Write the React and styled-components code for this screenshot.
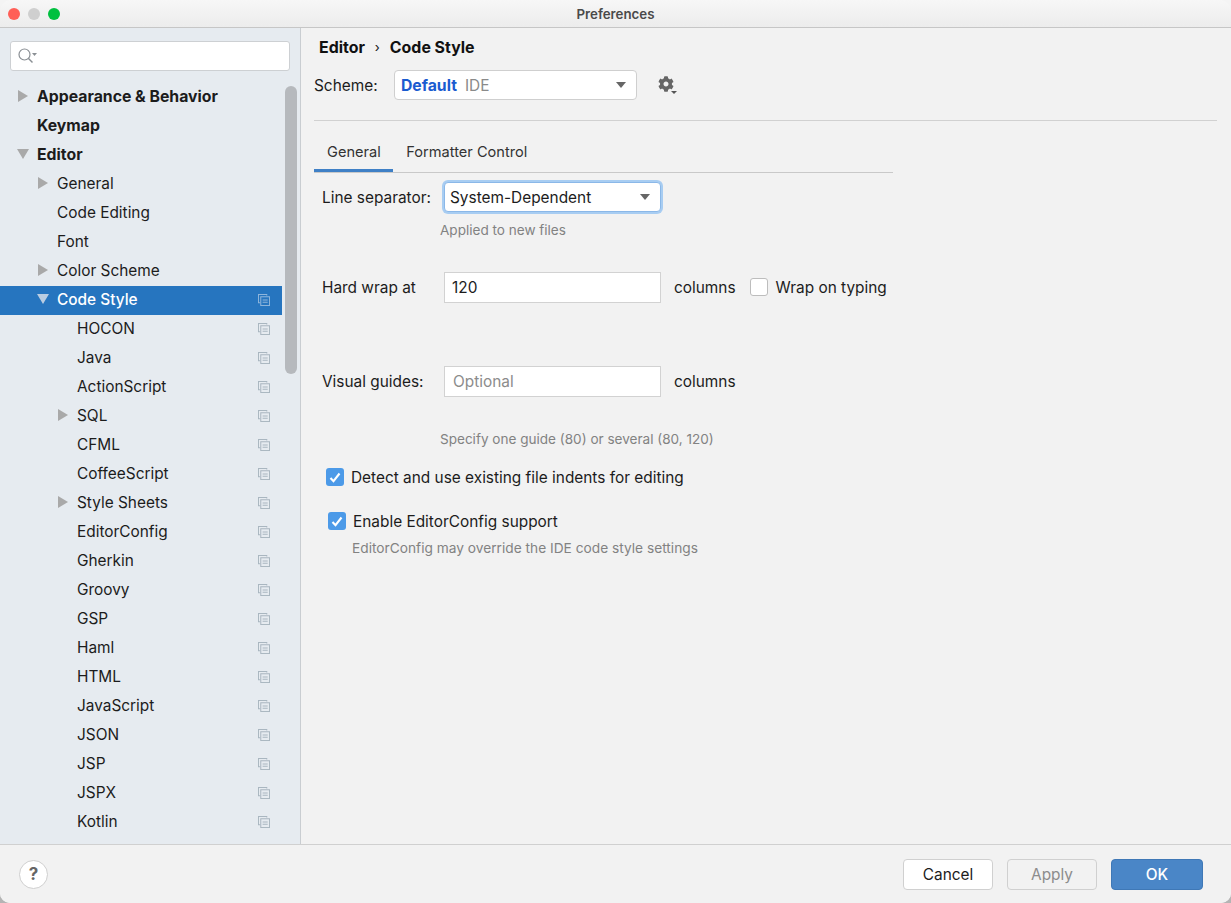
import React from 'react';
import styled, { createGlobalStyle } from 'styled-components';
import { FaCog } from 'react-icons/fa';

const Global = createGlobalStyle`
  html, body {
    margin: 0;
    padding: 0;
  }
  html {
    background: linear-gradient(#f4f4f4 50%, #b4b4b4 50%);
  }
  body {
    font-family: Inter, "Liberation Sans", sans-serif;
    -webkit-font-smoothing: antialiased;
  }
`;

const Window = styled.div`
  width: 1231px;
  height: 903px;
  display: flex;
  flex-direction: column;
  background: #f2f2f2;
  border-radius: 10px;
  overflow: hidden;
  color: #1c1c1c;
  font-size: 15.4px;
`;

const TitleBar = styled.div`
  height: 27px;
  flex: none;
  position: relative;
  display: flex;
  align-items: center;
  justify-content: center;
  background: linear-gradient(#f7f7f7, #ececec);
  border-bottom: 1px solid #c6c6c6;
  font-size: 13.3px;
  font-weight: 600;
  color: #4a4a4a;
`;

const Lights = styled.div`
  position: absolute;
  left: 8px;
  top: 8px;
  display: flex;
  gap: 8px;
`;

const Light = styled.span`
  width: 12px;
  height: 12px;
  border-radius: 50%;
  background: ${p => p.$color};
`;

const Main = styled.div`
  flex: 1;
  min-height: 0;
  display: flex;
`;

const Sidebar = styled.div`
  width: 300px;
  flex: none;
  position: relative;
  display: flex;
  flex-direction: column;
  background: #e6ebf0;
  border-right: 1px solid #c9cdd1;
  overflow: hidden;
`;

const SearchBox = styled.div`
  margin: 13px 10px 12px;
  height: 30px;
  flex: none;
  box-sizing: border-box;
  display: flex;
  align-items: center;
  padding-left: 7px;
  background: #fff;
  border: 1px solid #cdd0d3;
  border-radius: 3px;
`;

const TreeList = styled.div`
  width: 282px;
  flex: none;
  display: flex;
  flex-direction: column;
`;

const Row = styled.div`
  height: 29px;
  box-sizing: border-box;
  flex: none;
  display: flex;
  align-items: center;
  padding-left: ${p => p.$level * 20 + 17}px;
  padding-bottom: 3px;
  background: ${p => (p.$selected ? '#2675bf' : 'transparent')};
  color: ${p => (p.$selected ? '#fff' : '#1c1c1c')};
  font-weight: ${p => (p.$bold ? 700 : p.$selected ? 500 : 400)};
  font-size: ${p => (p.$bold ? 15.8 : 15.4)}px;
`;

const ArrowSlot = styled.span`
  width: 20px;
  flex: none;
  display: flex;
  align-items: center;
`;

const RowLabel = styled.span`
  flex: 1;
  white-space: nowrap;
`;

const CopyWrap = styled.span`
  width: 12px;
  height: 12px;
  margin-right: 12px;
  margin-top: 2px;
  display: flex;
`;

const ScrollThumb = styled.div`
  position: absolute;
  left: 285px;
  top: 58px;
  width: 12px;
  height: 288px;
  border-radius: 6px;
  background: #b6b9bd;
`;

const Content = styled.div`
  flex: 1;
  min-width: 0;
  padding: 0 14px 0 13px;
  display: flex;
  flex-direction: column;
`;

const Breadcrumb = styled.div`
  height: 38px;
  padding-left: 5px;
  display: flex;
  align-items: center;
  gap: 10px;
  font-weight: 700;
  color: #111;
  box-sizing: border-box;
`;

const Crumb = styled.span`
  font-size: 15.9px;
`;

const CrumbSep = styled.span`
  font-size: 13px;
  font-weight: 400;
`;

const SchemeRow = styled.div`
  margin-top: 4px;
  display: flex;
  align-items: center;
  height: 30px;
`;

const SchemeLabel = styled.span`
  width: 80px;
`;

const Dropdown = styled.div`
  box-sizing: border-box;
  width: ${p => p.$width}px;
  height: 30px;
  display: flex;
  align-items: center;
  padding: 0 9px 0 ${p => (p.$focused ? 5 : 6)}px;
  background: #fff;
  border-radius: 4px;
  border: 1px solid ${p => (p.$focused ? '#8bb8e8' : '#cfcfcf')};
  box-shadow: ${p => (p.$focused ? '0 0 0 2px #a8cdf2' : 'none')};
`;

const DropText = styled.span`
  flex: 1;
  white-space: nowrap;
`;

const SchemeName = styled.span`
  color: #1a5bd0;
  font-weight: 700;
  font-size: 15.75px;
  margin-right: 8px;
`;

const SchemeKind = styled.span`
  color: #8a8a8a;
`;

const GearBtn = styled.span`
  position: relative;
  margin-left: 21px;
  margin-top: 2px;
  width: 22px;
  height: 20px;
  color: #666;
  display: flex;
`;

const GearArrow = styled.span`
  position: absolute;
  right: 3px;
  bottom: 2px;
  border-left: 3px solid transparent;
  border-right: 3px solid transparent;
  border-top: 3px solid #555;
`;

const Divider = styled.div`
  height: 1px;
  margin-top: 20px;
  background: #d1d1d1;
`;

const TabBar = styled.div`
  margin-top: 16px;
  width: 579px;
  height: 35px;
  box-sizing: content-box;
  display: flex;
  border-bottom: 1px solid #c9c9c9;
`;

const Tab = styled.div`
  box-sizing: border-box;
  height: 35px;
  padding: 0 12.5px 3px 13px;
  display: flex;
  align-items: center;
  font-size: 14.6px;
  color: #333;
  border-bottom: 3px solid ${p => (p.$active ? '#3f80c6' : 'transparent')};
`;

const Form = styled.div`
  padding-left: 8px;
  display: flex;
  flex-direction: column;
`;

const FieldRow = styled.div`
  margin-top: ${p => p.$top}px;
  height: 30px;
  display: flex;
  align-items: center;
  white-space: nowrap;
`;

const FieldLabel = styled.span`
  width: 122px;
  flex: none;
`;

const TextBox = styled.div`
  box-sizing: border-box;
  width: 217px;
  height: 31px;
  display: flex;
  align-items: center;
  padding-left: ${p => (p.$placeholder ? 8 : 7)}px;
  background: #fff;
  border: 1px solid #d2d2d2;
  color: ${p => (p.$placeholder ? '#8c8c8c' : '#1c1c1c')};
`;

const Unit = styled.span`
  margin-left: 13px;
`;

const Hint = styled.div`
  margin-top: ${p => p.$top}px;
  margin-left: ${p => p.$left}px;
  height: 18px;
  line-height: 18px;
  font-size: ${p => p.$size || 13.55}px;
  color: #828282;
  white-space: nowrap;
`;

const CheckRow = styled.div`
  margin-top: ${p => p.$top}px;
  margin-left: ${p => p.$left}px;
  display: flex;
  align-items: center;
  height: 18px;
  gap: ${p => p.$gap}px;
  white-space: nowrap;
`;

const CheckBox = styled.span`
  box-sizing: border-box;
  width: 18px;
  height: 18px;
  flex: none;
  display: flex;
  align-items: center;
  justify-content: center;
  border-radius: 3px;
  background: ${p => (p.$checked ? '#4c9ae8' : '#fff')};
  border: ${p => (p.$checked ? 'none' : '1px solid #bdbdbd')};
`;

const InlineCheck = styled(CheckRow)`
  margin: 0 0 0 14px;
`;

const Footer = styled.div`
  height: 59px;
  flex: none;
  box-sizing: border-box;
  border-top: 1px solid #d0d0d0;
  background: #f2f2f2;
  display: flex;
  align-items: center;
  justify-content: space-between;
  padding: 0 28px 0 19px;
`;

const HelpButton = styled.span`
  box-sizing: border-box;
  width: 29px;
  height: 29px;
  border-radius: 50%;
  background: #fff;
  border: 1px solid #cfcfcf;
  display: flex;
  align-items: center;
  justify-content: center;
  font-size: 17px;
  font-weight: 700;
  color: #666;
`;

const ButtonGroup = styled.div`
  display: flex;
  gap: 14px;
`;

const Button = styled.button`
  box-sizing: border-box;
  width: ${p => (p.$primary ? 92 : 90)}px;
  height: 31px;
  padding: 0;
  font: inherit;
  border-radius: 4px;
  background: ${p => (p.$primary ? '#4a86c7' : p.disabled ? '#f2f2f2' : '#fff')};
  border: 1px solid ${p => (p.$primary ? '#3f78b6' : '#d0d0d0')};
  color: ${p => (p.$primary ? '#fff' : p.disabled ? '#8c8c8c' : '#1c1c1c')};
  font-weight: ${p => (p.$primary ? 500 : 400)};
`;

const Triangle = ({ down, color = '#a9a9a9' }) => (
  <svg width="12" height="12" viewBox="0 0 12 12">
    <path d={down ? 'M0 1h12L6 11z' : 'M1 0l10 6-10 6z'} fill={color} />
  </svg>
);

const Caret = () => (
  <svg width="10" height="6" viewBox="0 0 10 6">
    <path d="M0 0h10L5 6z" fill="#666" />
  </svg>
);

const CaretGap = styled.span`
  display: flex;
  margin-right: 1px;
`;

const CopyIcon = ({ selected }) => {
  const c = selected ? '#8fb6dc' : '#a9b6c0';
  return (
    <svg width="12" height="12" viewBox="0 0 13 13" fill="none" stroke={c} strokeWidth="1.1">
      <path d="M9.5 1.5v-1h-9v9h2" />
      <rect x="3" y="3" width="9.5" height="9.5" />
      <path d="M5 6.5h5.5M5 9h5.5" />
    </svg>
  );
};

const SearchIcon = () => (
  <svg width="20" height="16" viewBox="0 0 20 16" fill="none" stroke="#8a8f94" strokeWidth="1.2">
    <circle cx="6.5" cy="6.5" r="5.5" />
    <path d="M10.5 10.5l4 4" strokeWidth="1.5" />
    <path d="M14 5h5l-2.5 3z" fill="#8a8f94" stroke="none" />
  </svg>
);

const Check = () => (
  <svg width="12" height="11" viewBox="0 0 12 11" fill="none" stroke="#fff" strokeWidth="2.1">
    <path d="M1.5 6l3 3.2L10.5 1.5" />
  </svg>
);

const treeItems = [
  { label: 'Appearance & Behavior', level: 0, bold: true, arrow: 'right' },
  { label: 'Keymap', level: 0, bold: true },
  { label: 'Editor', level: 0, bold: true, arrow: 'down' },
  { label: 'General', level: 1, arrow: 'right' },
  { label: 'Code Editing', level: 1 },
  { label: 'Font', level: 1 },
  { label: 'Color Scheme', level: 1, arrow: 'right' },
  { label: 'Code Style', level: 1, arrow: 'down', selected: true, copy: true },
  { label: 'HOCON', level: 2, copy: true },
  { label: 'Java', level: 2, copy: true },
  { label: 'ActionScript', level: 2, copy: true },
  { label: 'SQL', level: 2, arrow: 'right', copy: true },
  { label: 'CFML', level: 2, copy: true },
  { label: 'CoffeeScript', level: 2, copy: true },
  { label: 'Style Sheets', level: 2, arrow: 'right', copy: true },
  { label: 'EditorConfig', level: 2, copy: true },
  { label: 'Gherkin', level: 2, copy: true },
  { label: 'Groovy', level: 2, copy: true },
  { label: 'GSP', level: 2, copy: true },
  { label: 'Haml', level: 2, copy: true },
  { label: 'HTML', level: 2, copy: true },
  { label: 'JavaScript', level: 2, copy: true },
  { label: 'JSON', level: 2, copy: true },
  { label: 'JSP', level: 2, copy: true },
  { label: 'JSPX', level: 2, copy: true },
  { label: 'Kotlin', level: 2, copy: true },
  { label: 'Markdown', level: 2, copy: true },
];

const TreeRow = ({ item }) => (
  <Row $level={item.level} $bold={item.bold} $selected={item.selected}>
    <ArrowSlot>
      {item.arrow && <Triangle down={item.arrow === 'down'} color={item.selected ? '#b9cde2' : '#a9a9a9'} />}
    </ArrowSlot>
    <RowLabel>{item.label}</RowLabel>
    {item.copy && (
      <CopyWrap>
        <CopyIcon selected={item.selected} />
      </CopyWrap>
    )}
  </Row>
);

export default function App() {
  return (
    <>
      <Global />
      <Window>
        <TitleBar>
          <Lights>
            <Light $color="#ff5f57" />
            <Light $color="#cfcfcf" />
            <Light $color="#00c03f" />
          </Lights>
          Preferences
        </TitleBar>
        <Main>
          <Sidebar>
            <SearchBox>
              <SearchIcon />
            </SearchBox>
            <TreeList>
              {treeItems.map(item => (
                <TreeRow key={item.label} item={item} />
              ))}
            </TreeList>
            <ScrollThumb />
          </Sidebar>
          <Content>
            <Breadcrumb>
              <Crumb>Editor</Crumb>
              <CrumbSep>›</CrumbSep>
              <Crumb>Code Style</Crumb>
            </Breadcrumb>
            <SchemeRow>
              <SchemeLabel>Scheme:</SchemeLabel>
              <Dropdown $width={243}>
                <DropText>
                  <SchemeName>Default</SchemeName>
                  <SchemeKind>IDE</SchemeKind>
                </DropText>
                <CaretGap><Caret /></CaretGap>
              </Dropdown>
              <GearBtn>
                <FaCog size={16} />
                <GearArrow />
              </GearBtn>
            </SchemeRow>
            <Divider />
            <TabBar>
              <Tab $active>General</Tab>
              <Tab>Formatter Control</Tab>
            </TabBar>
            <Form>
              <FieldRow $top={9}>
                <FieldLabel>Line separator:</FieldLabel>
                <Dropdown $width={217} $focused>
                  <DropText>System-Dependent</DropText>
                  <CaretGap><Caret /></CaretGap>
                </Dropdown>
              </FieldRow>
              <Hint $top={9} $left={118}>Applied to new files</Hint>
              <FieldRow $top={33}>
                <FieldLabel>Hard wrap at</FieldLabel>
                <TextBox>120</TextBox>
                <Unit>columns</Unit>
                <InlineCheck $gap={8}>
                  <CheckBox />
                  Wrap on typing
                </InlineCheck>
              </FieldRow>
              <FieldRow $top={64}>
                <FieldLabel>Visual guides:</FieldLabel>
                <TextBox $placeholder>Optional</TextBox>
                <Unit>columns</Unit>
              </FieldRow>
              <Hint $top={34} $left={118}>Specify one guide (80) or several (80, 120)</Hint>
              <CheckRow $top={20} $left={4} $gap={7}>
                <CheckBox $checked><Check /></CheckBox>
                Detect and use existing file indents for editing
              </CheckRow>
              <CheckRow $top={26} $left={6} $gap={7}>
                <CheckBox $checked><Check /></CheckBox>
                Enable EditorConfig support
              </CheckRow>
              <Hint $top={9} $left={30} $size={13.72}>EditorConfig may override the IDE code style settings</Hint>
            </Form>
          </Content>
        </Main>
        <Footer>
          <HelpButton>?</HelpButton>
          <ButtonGroup>
            <Button>Cancel</Button>
            <Button disabled>Apply</Button>
            <Button $primary>OK</Button>
          </ButtonGroup>
        </Footer>
      </Window>
    </>
  );
}
